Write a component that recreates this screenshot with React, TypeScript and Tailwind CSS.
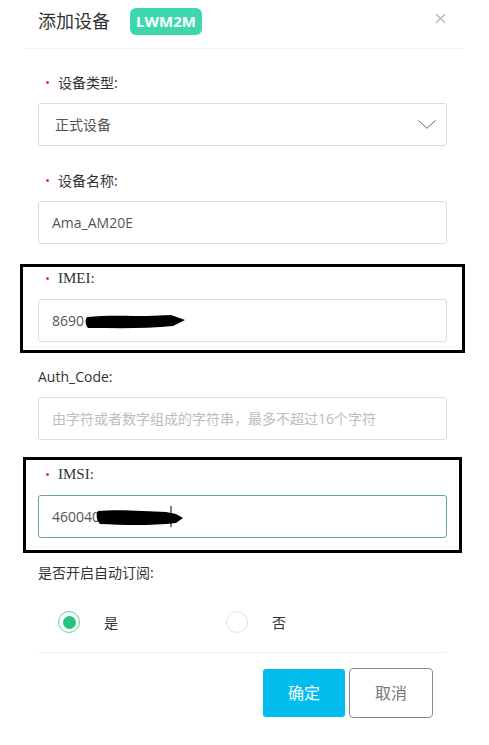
import { ReactNode } from "react";

const sans = { fontFamily: '"Open Sans", "Noto Sans CJK SC", sans-serif' };

function Label({ text, required, serif }: { text: string; required?: boolean; serif?: boolean }) {
  return (
    <div className="flex h-[20px] items-center text-[14px] text-[#333]">
      {required && <span className="ml-[8px] mr-[9px] h-[3px] w-[3px] rounded-full bg-[#e0393e]" />}
      <span className={serif ? "font-['Liberation_Serif','Noto_Sans_CJK_SC',serif] text-[15px]" : ""}>{text}</span>
    </div>
  );
}

function Input({ children, focused, pl = "pl-[13px]" }: { children: ReactNode; focused?: boolean; pl?: string }) {
  return (
    <div
      className={`relative mt-[11px] flex h-[43px] items-center rounded-[3px] border ${pl} text-[14px] text-[#555] ${
        focused ? "border-[#67a0a6]" : "border-[#dcdcdc]"
      }`}
    >
      {children}
    </div>
  );
}

function Radio({ label, checked }: { label: string; checked?: boolean }) {
  return (
    <div className="flex w-[168px] items-center">
      <span
        className={`flex h-[22px] w-[22px] items-center justify-center rounded-full border ${
          checked ? "border-[#5fd0a4]" : "border-[#e2e2e2]"
        }`}
      >
        {checked && <span className="h-[13px] w-[13px] rounded-full bg-[#24c37f]" />}
      </span>
      <span className="ml-[24px] text-[14px] text-[#333]">{label}</span>
    </div>
  );
}

export default function App() {
  return (
    <div className="h-[745px] w-[489px] overflow-hidden bg-white" style={sans}>
      <div className="ml-[24px] mr-[26px] flex h-[49px] items-start border-b border-[#f0f0f0] pl-[14px] pr-[17px] pt-[8px]">
        <div className="flex h-[27px] items-center">
          <h3 className="text-[18px] font-normal text-[#333]">添加设备</h3>
          <span className="ml-[20px] flex h-[27px] w-[72px] items-center justify-center rounded-[6px] bg-[#3ed6ad] text-[15px] font-bold text-white">
            LWM2M
          </span>
        </div>
        <button type="button" className="ml-auto mt-[5px]" aria-label="关闭">
          <svg width="11" height="11" viewBox="0 0 11 11">
            <path d="M1 1 L10 10 M10 1 L1 10" stroke="#bdbdbd" strokeWidth="1.6" />
          </svg>
        </button>
      </div>

      <form className="pl-[38px] pr-[42px] pt-[23px]">
        <Label text="设备类型:" required />
        <Input pl="pl-[16px]">
          <span>正式设备</span>
          <svg className="ml-auto mr-[10px]" width="18" height="9" viewBox="0 0 18 9">
            <path d="M0.5 0.5 L9 8.3 L17.5 0.5" fill="none" stroke="#666" strokeWidth="1" />
          </svg>
        </Input>

        <div className="mt-[24px]">
          <Label text="设备名称:" required />
          <Input>
            <span>Ama_AM20E</span>
          </Input>
        </div>

        <div className="relative mt-[24px]">
          <div className="pointer-events-none absolute -bottom-[11px] -left-[18px] -right-[18px] -top-[4px] border-[3px] border-black" />
          <Label text="IMEI:" required serif />
          <Input>
            <span>8690</span>
            <svg className="absolute left-[46px] top-[14px]" width="102" height="16" viewBox="0 0 102 16">
              <path d="M2 3 C20 1 45 2 62 2 L86 1 L100 6 L88 12 C60 15 30 14 3 14 C0 10 0 6 2 3 Z" fill="#000" />
            </svg>
          </Input>
        </div>

        <div className="mt-[24px]">
          <Label text="Auth_Code:" />
          <Input>
            <span className="text-[#bdbdbd]">由字符或者数字组成的字符串，最多不超过16个字符</span>
          </Input>
        </div>

        <div className="relative mt-[24px]">
          <div className="pointer-events-none absolute -bottom-[15px] -left-[15px] -right-[15px] -top-[7px] border-[3px] border-black" />
          <Label text="IMSI:" required serif />
          <Input focused>
            <span>460040</span>
            <svg className="absolute left-[57px] top-[9px]" width="90" height="25" viewBox="0 0 90 25">
              <path d="M2 6 C20 4 50 6 70 7 L80 9 L87 13 L80 18 C55 21 25 20 4 19 C0 14 0 9 2 6 Z" fill="#000" />
              <path d="M75 1 L75 22" stroke="#000" strokeWidth="1" />
            </svg>
          </Input>
        </div>

        <div className="mt-[24px]">
          <Label text="是否开启自动订阅:" />
        </div>

        <div className="mt-[29px] flex pl-[20px]">
          <Radio label="是" checked />
          <Radio label="否" />
        </div>

        <div className="mt-[19px] border-t border-[#f2f2f2]" />

        <div className="mt-[15px] flex items-center justify-end gap-[4px] pr-[14px]">
          <button type="submit" className="h-[48px] w-[82px] rounded-[3px] bg-[#00bdee] text-[16px] text-white">
            确定
          </button>
          <button type="button" className="h-[50px] w-[84px] rounded-[4px] border border-[#8a8a8a] bg-white text-[16px] text-[#777]">
            取消
          </button>
        </div>
      </form>
    </div>
  );
}
